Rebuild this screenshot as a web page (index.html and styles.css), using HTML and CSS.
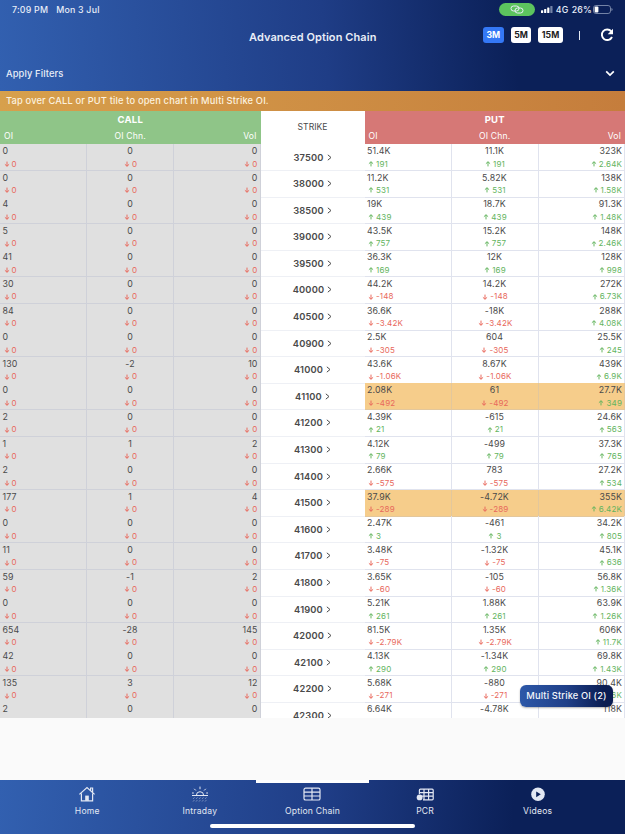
FILE: index.html
```html
<!DOCTYPE html>
<html lang="en">
<head>
  <meta charset="UTF-8" />
  <meta name="viewport" content="width=device-width, initial-scale=1" />
  <title>Advanced Option Chain</title>
  <link rel="stylesheet" href="styles.css">
</head>
<body>

  <svg class="sprite" aria-hidden="true">
    <symbol id="down" viewBox="0 0 8 8"><path d="M4 .8V7M1.2 4.4 4 7l2.8-2.6" /></symbol>
    <symbol id="up" viewBox="0 0 8 8"><path d="M4 7.2V1M1.2 3.6 4 1l2.8 2.6" /></symbol>
    <symbol id="next" viewBox="0 0 6 8"><path d="M1 .8 4.8 4 1 7.2" /></symbol>
  </svg>

  <header class="header">
    <div class="status">
      <span>7:09 PM</span>
      <span class="date">Mon 3 Jul</span>
      <span class="hotspot">
        <svg width="14" height="9" viewBox="0 0 14 9"><rect x="1" y="1" width="8" height="5" rx="2.5" /><rect x="5" y="3" width="8" height="5" rx="2.5" /></svg>
      </span>
      <svg class="signal" width="12" height="7" viewBox="0 0 12 7"><rect y="4.2" width="2.2" height="2.8" rx=".5" /><rect x="3.1" y="3" width="2.2" height="4" rx=".5" /><rect x="6.2" y="1.6" width="2.2" height="5.4" rx=".5" /><rect class="off" x="9.3" y="0" width="2.2" height="7" rx=".5" /></svg>
      <span class="net">4G</span>
      <span class="percent">26%</span>
      <svg class="battery" width="20" height="9" viewBox="0 0 20 9"><rect class="shell" x=".5" y=".5" width="17" height="8" rx="2.4" /><rect x="1.6" y="1.6" width="3.8" height="5.8" rx="1" /><path class="off" d="M18.4 3v3q1.2-.4 1.2-1.5T18.4 3z" /></svg>
    </div>

    <div class="toolbar">
      <h1 class="title">Advanced Option Chain</h1>
      <div class="periods">
        <button class="period active">3M</button>
        <button class="period">5M</button>
        <button class="period">15M</button>
      </div>
      <span class="divider"></span>
      <svg class="refresh" width="14" height="14" viewBox="0 0 14 14"><path d="M11.3 3.4A5.3 5.3 0 1 0 12 9" /><path class="tip" d="M13 .8v5.4H7.7z" /></svg>
    </div>

    <div class="filters">
      <span>Apply Filters</span>
      <svg width="10" height="7" viewBox="0 0 10 7"><path d="M1.2 1.4 5 5.1l3.8-3.7" /></svg>
    </div>
  </header>

  <div class="notice">Tap over CALL or PUT tile to open chart in Multi Strike OI.</div>

  <main class="chain">
    <div class="head">
      <div class="side call">
        <b>CALL</b>
        <div class="labels"><span>OI</span><span>OI Chn.</span><span>Vol</span></div>
      </div>
      <div class="strike-label">STRIKE</div>
      <div class="side put">
        <b>PUT</b>
        <div class="labels"><span>OI</span><span>OI Chn.</span><span>Vol</span></div>
      </div>
    </div>
    <div id="rows"></div>
    <button class="multi">Multi Strike OI (2)</button>
  </main>

  <nav class="tabs">
    <a class="tab">
      <svg width="18" height="16" viewBox="0 0 18 16"><path d="M1.4 8.4 9 1.6l7.6 6.8M12.6 4.6V2h2v4.6M3.4 7.4v7.4h11.2V7.4" /><path class="solid" d="M7.2 9.6h3.6v5.2H7.2z" /></svg>
      Home
    </a>
    <a class="tab">
      <svg class="thin" width="18" height="16" viewBox="0 0 18 16"><path d="M1 9.5h16M5.4 9.3a3.6 3.6 0 0 1 7.2 0M9 .6v2.6M3.2 2.8l1.7 1.7M14.8 2.8l-1.7 1.7M1 7h1.8M15.2 7H17" /><path class="haze" d="M2 13l1.5-1.7M5 13l1.5-1.7M8 13l1.5-1.7M11 13l1.5-1.7M14 13l1.5-1.7M2 15.6l1.5-1.7M5 15.6l1.5-1.7M8 15.6l1.5-1.7M11 15.6l1.5-1.7M14 15.6l1.5-1.7" /></svg>
      Intraday
    </a>
    <a class="tab current">
      <svg width="18" height="16" viewBox="0 0 18 16"><rect x="1" y="2.2" width="16" height="11.8" rx="1.6" /><path d="M1 6.1h16M1 10h16M9 2.2V14" /></svg>
      Option Chain
    </a>
    <a class="tab">
      <svg width="18" height="16" viewBox="0 0 18 16"><path d="M3.4 8V4.2q0-1 1-1h11.8q1 0 1 1v8.6q0 1-1 1H7M3.4 6.6h13.8M5 10.2h12.2M8 3.2v10.6M12.6 3.2v10.6" /><circle class="solid" cx="3.6" cy="11.4" r="2.9" /></svg>
      PCR
    </a>
    <a class="tab">
      <svg width="18" height="16" viewBox="0 0 18 16"><circle class="solid" cx="9" cy="8.3" r="6.8" /><path class="play" d="M7.2 5.4v5.8l4.6-2.9z" /></svg>
      Videos
    </a>
    <span class="home-bar"></span>
  </nav>

  <script>
  (() => {
    // call: oi, oi change, vol | strike | put: oi, oi delta, chn, vol, vol delta
    const data = [
      ['0', '0', '0', 37500, '51.4K', '191', '11.1K', '323K', '2.64K'],
      ['0', '0', '0', 38000, '11.2K', '531', '5.82K', '138K', '1.58K'],
      ['4', '0', '0', 38500, '19K', '439', '18.7K', '91.3K', '1.48K'],
      ['5', '0', '0', 39000, '43.5K', '757', '15.2K', '148K', '2.46K'],
      ['41', '0', '0', 39500, '36.3K', '169', '12K', '128K', '998'],
      ['30', '0', '0', 40000, '44.2K', '-148', '14.2K', '272K', '6.73K'],
      ['84', '0', '0', 40500, '36.6K', '-3.42K', '-18K', '288K', '4.08K'],
      ['0', '0', '0', 40900, '2.5K', '-305', '604', '25.5K', '245'],
      ['130', '-2', '10', 41000, '43.6K', '-1.06K', '8.67K', '439K', '6.9K'],
      ['0', '0', '0', 41100, '2.08K', '-492', '61', '27.7K', '349'],
      ['2', '0', '0', 41200, '4.39K', '21', '-615', '24.6K', '563'],
      ['1', '1', '2', 41300, '4.12K', '79', '-499', '37.3K', '765'],
      ['2', '0', '0', 41400, '2.66K', '-575', '783', '27.2K', '534'],
      ['177', '1', '4', 41500, '37.9K', '-289', '-4.72K', '355K', '6.42K'],
      ['0', '0', '0', 41600, '2.47K', '3', '-461', '34.2K', '805'],
      ['11', '0', '0', 41700, '3.48K', '-75', '-1.32K', '45.1K', '636'],
      ['59', '-1', '2', 41800, '3.65K', '-60', '-105', '56.8K', '1.36K'],
      ['0', '0', '0', 41900, '5.21K', '261', '1.88K', '63.9K', '1.26K'],
      ['654', '-28', '145', 42000, '81.5K', '-2.79K', '1.35K', '606K', '11.7K'],
      ['42', '0', '0', 42100, '4.13K', '290', '-1.34K', '69.8K', '1.43K'],
      ['135', '3', '12', 42200, '5.68K', '-271', '-880', '90.4K', '1.26K'],
      ['2', '0', '0', 42300, '6.64K', '', '-4.78K', '118K', '']
    ];
    const selected = [41100, 41500];

    const cell = (value, delta) => {
      const dir = delta === '0' || delta.startsWith('-') ? 'down' : 'up';
      const change = delta ? `<small class="${dir}"><svg><use href="#${dir}" /></svg>${delta}</small>` : '';
      return `<div class="cell"><span>${value}</span>${change}</div>`;
    };

    document.getElementById('rows').innerHTML = data.map(([oi, chn, vol, strike, pOi, pDelta, pChn, pVol, pVolDelta], i) => {
      const d = i < data.length - 1 ? '0' : '';
      return `<div class="row">
        <div class="group call-cells">${cell(oi, d)}${cell(chn, d)}${cell(vol, d)}</div>
        <div class="strike">${strike}<svg><use href="#next" /></svg></div>
        <div class="group put-cells${selected.includes(strike) ? ' selected' : ''}">${cell(pOi, pDelta)}${cell(pChn, pDelta)}${cell(pVol, pVolDelta)}</div>
      </div>`;
    }).join('');
  })();
  </script>

</body>
</html>
```
FILE: styles.css
```css
* {
  margin: 0; padding: 0; box-sizing: border-box;
}
body {
  width: 625px;
  height: 834px;
  display: flex;
  flex-direction: column;
  overflow: hidden;
  background: #fafafa;
  color: #4a4a4a;
  font-family: Inter, "Liberation Sans", sans-serif;
}
svg {
  display: block;
  flex: none;
  fill: none;
  stroke: currentColor;
}
button {
  border: none;
  font-family: inherit;
}
.sprite {
  display: none;
}

/* Header */
.header {
  height: 91px;
  flex: none;
  color: #e9eef8;
  background: linear-gradient(85deg, #3260b0, #1f3d86 52%, #0b2058 82%);
}
.status {
  height: 18px;
  display: flex;
  align-items: center;
  padding: 0 12px;
  font-size: 8.8px;
  font-weight: 500;
  letter-spacing: .22px;
}
.date {
  margin-left: 8px;
}
.hotspot {
  width: 36px;
  height: 13px;
  margin-left: auto;
  display: grid;
  place-items: center;
  border-radius: 7px;
  background: #5cc45e;
}
.signal {
  margin-left: 6px;
  fill: #fff;
  stroke: none;
}
.signal .off, .battery .off {
  fill: #7483a6;
  stroke: none;
}
.net {
  margin-left: 3px;
}
.percent {
  margin-left: 3px;
}
.battery {
  margin-left: 1px;
  fill: #fff;
  stroke: none;
}
.battery .shell {
  fill: none;
  stroke: #7483a6;
}
.toolbar {
  height: 34px;
  display: grid;
  grid-template-columns: 249px 232px 91px 28px 14px;
  align-items: center;
}
.title {
  grid-column: 2;
  padding-top: 3px;
  font-size: 11px;
  font-weight: 600;
  letter-spacing: .08px;
}
.periods {
  display: flex;
  gap: 7px;
  padding-left: 2px;
}
.period {
  height: 16px;
  padding: 0 3.5px;
  border-radius: 3px;
  background: #fff;
  color: #222;
  font-size: 8.7px;
  font-weight: 700;
}
.period.active {
  background: #3478f6;
  color: #fff;
}
.divider {
  width: 1px;
  height: 9px;
  margin-left: 7px;
  background: #e4e8f2;
}
.refresh {
  color: #fff;
  stroke-width: 1.9;
}
.refresh .tip {
  fill: currentColor;
  stroke: none;
}
.filters {
  height: 39px;
  display: flex;
  align-items: center;
  justify-content: space-between;
  padding: 4px 10px 0 6px;
  font-size: 9.3px;
  font-weight: 500;
  letter-spacing: .13px;
}
.filters svg {
  color: #fff;
  stroke-width: 1.7;
}

.notice {
  height: 20px;
  flex: none;
  padding-left: 6px;
  line-height: 20px;
  font-size: 9.3px;
  font-weight: 500;
  letter-spacing: .16px;
  color: #fcf1df;
  background: linear-gradient(90deg, #d7a04c, #c57d3c);
}

/* Option chain */
.chain {
  position: relative;
  height: 606.5px;
  flex: none;
  overflow: hidden;
  background: #fff;
}
.head, .row {
  display: grid;
  grid-template-columns: 260.5px 104px 260.5px;
}
.head {
  height: 33px;
}
.side {
  color: #fff;
  text-align: center;
}
.side b {
  display: block;
  height: 17px;
  line-height: 17px;
  font-size: 9.5px;
  font-weight: 700;
  letter-spacing: .2px;
}
.call {
  background: #8fc588;
}
.put {
  background: #d67876;
}
.labels {
  display: grid;
  grid-template-columns: repeat(3, 1fr);
  padding: 0 4px;
  line-height: 16px;
  font-size: 8.6px;
  letter-spacing: .2px;
}
.labels :first-child {
  text-align: left;
}
.labels :last-child {
  text-align: right;
}
.strike-label {
  line-height: 33px;
  text-align: center;
  font-size: 8.6px;
}
.row {
  height: 26.6px;
}
.group {
  display: grid;
  grid-template-columns: 87px 87px 1fr;
}
.call-cells {
  background: #e0e0e0;
}
.put-cells.selected {
  background: #f6cd8b;
}
.cell {
  display: flex;
  flex-direction: column;
  align-items: center;
  padding: 1px 2px 0;
  border-right: 1px solid #cfd1d9;
  border-bottom: 1px solid #cfd1d9;
}
.put-cells .cell {
  border-color: #e0e3ee;
}
.selected .cell {
  border-color: #e3c79c;
}
.cell:first-child {
  align-items: flex-start;
  padding-left: 2.5px;
}
.cell:last-child {
  align-items: flex-end;
}
.cell span {
  line-height: 12.5px;
  font-size: 8.8px;
  letter-spacing: .12px;
}
.cell small {
  display: flex;
  align-items: center;
  gap: 2px;
  padding-left: 1px;
  line-height: 12.5px;
  font-size: 8px;
  letter-spacing: .15px;
}
.cell small svg {
  width: 6px;
  height: 6px;
  stroke-width: 1.3;
}
.cell .down {
  color: #e8685c;
}
.cell .up {
  color: #63b45e;
}
.strike {
  display: flex;
  align-items: center;
  justify-content: center;
  gap: 3px;
  border-bottom: 1px solid #eef0f5;
  font-size: 9.3px;
  font-weight: 600;
  letter-spacing: .15px;
}
.strike svg {
  width: 5px;
  height: 7px;
  stroke-width: 1.2;
}
.multi {
  position: absolute;
  right: 12px;
  bottom: 11px;
  width: 93px;
  height: 22px;
  border-radius: 6px;
  color: #f3f5fb;
  font-size: 9.3px;
  font-weight: 500;
  letter-spacing: .15px;
  white-space: nowrap;
  background: linear-gradient(90deg, #2d58a8, #1f3f88 50%, #0a1d52 90%);
  box-shadow: 0 1px 2px rgba(0, 0, 0, .3);
}

/* Bottom tabs */
.tabs {
  position: relative;
  height: 54px;
  flex: none;
  display: flex;
  margin-top: auto;
  padding: 0 31px;
  background: linear-gradient(95deg, #3260b0, #1f3d86 52%, #0b2058 82%);
}
.tab {
  flex: 1;
  display: flex;
  flex-direction: column;
  align-items: center;
  gap: 4px;
  padding-top: 6px;
  color: #e3e8f3;
  font-size: 8.6px;
  letter-spacing: .2px;
  border-top: 0 solid #fff;
}
.tab.current {
  padding-top: 3px;
  border-top-width: 3px;
}
.tab svg {
  stroke-width: 1.2;
}
.tab .thin {
  stroke-width: 1;
}
.tab .haze {
  stroke-width: .6;
  opacity: .7;
}
.tab .solid {
  fill: currentColor;
  stroke: none;
}
.tab .play {
  fill: #0b2058;
  stroke: none;
}
.home-bar {
  position: absolute;
  left: 210px;
  bottom: 6px;
  width: 205px;
  height: 4px;
  border-radius: 2px;
  background: #fff;
}
```
